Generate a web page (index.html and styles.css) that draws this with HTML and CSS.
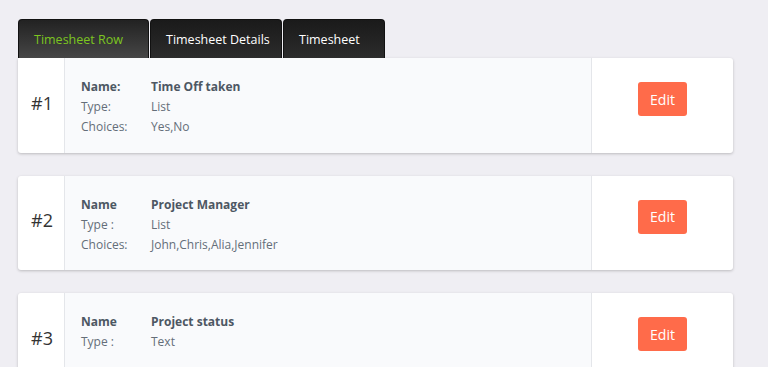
FILE: index.html
```html
<!DOCTYPE html>
<html lang="en">
<head>
    <meta charset="UTF-8">
    <title>Timesheet Fields</title>
    <link rel="stylesheet" href="styles.css">
</head>
<body>
    <div class="page">
        <div class="tabs">
            <div class="tab tab-active tab-row">Timesheet Row</div>
            <div class="tab tab-details">Timesheet Details</div>
            <div class="tab tab-sheet">Timesheet</div>
        </div>

        <div class="field-card">
            <div class="field-num">#1</div>
            <div class="field-info">
                <div class="info-row title"><span class="label">Name:</span><span>Time Off taken</span></div>
                <div class="info-row"><span class="label">Type:</span><span>List</span></div>
                <div class="info-row"><span class="label">Choices:</span><span>Yes,No</span></div>
            </div>
            <div class="field-action"><button class="edit-btn">Edit</button></div>
        </div>

        <div class="field-card">
            <div class="field-num">#2</div>
            <div class="field-info">
                <div class="info-row title"><span class="label">Name</span><span>Project Manager</span></div>
                <div class="info-row"><span class="label">Type :</span><span>List</span></div>
                <div class="info-row"><span class="label">Choices:</span><span>John,Chris,Alia,Jennifer</span></div>
            </div>
            <div class="field-action"><button class="edit-btn">Edit</button></div>
        </div>

        <div class="field-card">
            <div class="field-num">#3</div>
            <div class="field-info">
                <div class="info-row title"><span class="label">Name</span><span>Project status</span></div>
                <div class="info-row"><span class="label">Type :</span><span>Text</span></div>
            </div>
            <div class="field-action"><button class="edit-btn">Edit</button></div>
        </div>
    </div>
</body>
</html>
```

FILE: styles.css
```css
html, body {
    margin: 0;
    padding: 0;
    background-color: #efeef3;
    font-family: "Open Sans", "Noto Sans", sans-serif;
}
.page {
    padding: 19px 35px 0 18px;
}
.tabs {
    display: flex;
    gap: 1px;
}
.tab {
    height: 39px;
    box-sizing: border-box;
    padding-left: 15px;
    display: flex;
    align-items: center;
    font-size: 12.5px;
    color: #ffffff;
    background: linear-gradient(#1a1a1a, #2c2c2c);
    border: 1px solid #111;
    border-bottom: none;
    border-radius: 4px 4px 0 0;
}
.tab-active {
    color: #7cc520;
    background: linear-gradient(#222222, #464646);
}
.tab-row { width: 131px; }
.tab-details { width: 132px; }
.tab-sheet { width: 102px; }
.field-card {
    display: flex;
    height: 94.5px;
    background-color: #ffffff;
    border-radius: 0 3px 3px 3px;
    box-shadow: 0 1px 3px rgba(0,0,0,0.22);
    margin-bottom: 23px;
}
.field-card + .field-card {
    border-radius: 3px;
}
.field-num {
    width: 47px;
    flex-shrink: 0;
    display: flex;
    align-items: center;
    justify-content: center;
    padding: 0 0 5px 2px;
    box-sizing: border-box;
    font-size: 18px;
    color: #333333;
    border-right: 1px solid #e4e6ea;
}
.field-info {
    flex-grow: 1;
    background-color: #f9fafc;
    padding: 19px 15px 0 16px;
    border-right: 1px solid #e4e6ea;
    font-size: 12px;
    color: #646e79;
}
.info-row {
    display: flex;
    line-height: 20px;
}
.info-row .label {
    width: 70px;
    flex-shrink: 0;
}
.info-row.title {
    font-weight: bold;
    color: #4d5763;
}
.field-action {
    width: 141px;
    flex-shrink: 0;
    display: flex;
    justify-content: center;
    padding-top: 24px;
    box-sizing: border-box;
}
.edit-btn {
    width: 49px;
    height: 34px;
    border: none;
    border-radius: 3px;
    background-color: #ff6b4a;
    color: #ffffff;
    font-family: "Open Sans", "Noto Sans", sans-serif;
    font-size: 14px;
    padding: 0;
}
```
